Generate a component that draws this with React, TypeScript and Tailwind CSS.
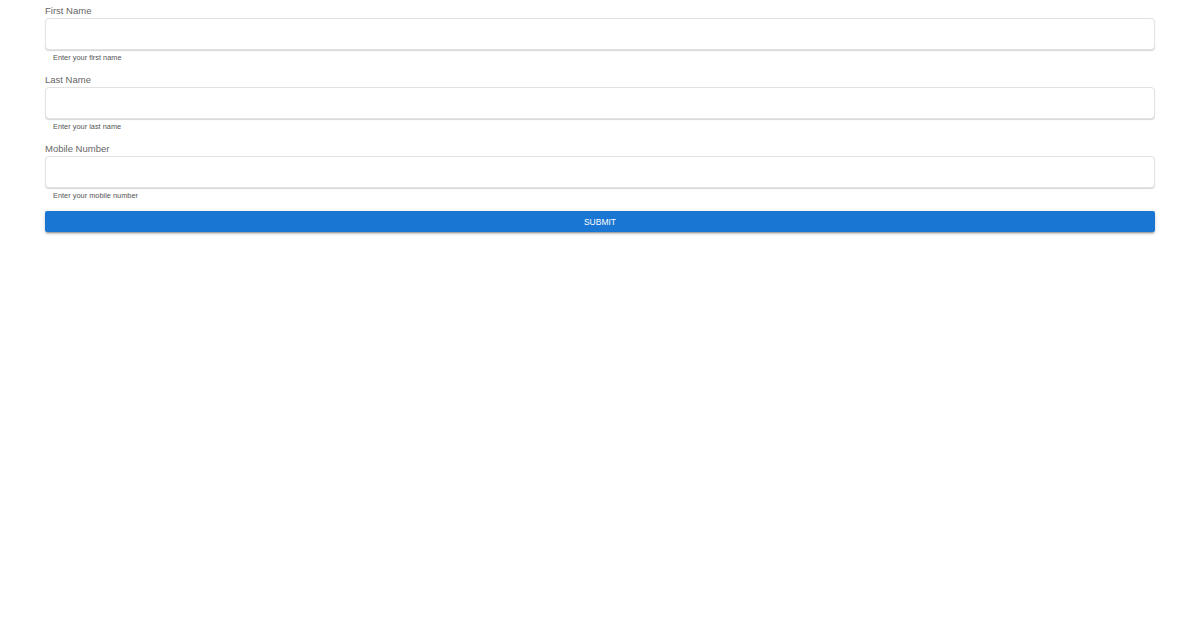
const fields = [
  { label: 'First Name', helper: 'Enter your first name' },
  { label: 'Last Name', helper: 'Enter your last name' },
  { label: 'Mobile Number', helper: 'Enter your mobile number' },
];

export default function App() {
  return (
    <div
      className="min-h-screen bg-white px-[45px] pt-[5px]"
      style={{ fontFamily: '"Liberation Sans", Arial, sans-serif' }}
    >
      <form className="flex flex-col" onSubmit={(e) => e.preventDefault()}>
        {fields.map((field) => (
          <div key={field.label} className="mb-[12px] flex flex-col">
            <label className="mb-px text-[9.5px] leading-[12px] text-[#666]">{field.label}</label>
            <input
              type="text"
              className="h-[32px] w-full rounded-[4px] border border-[#e2e2e2] bg-white px-2 text-sm outline-none shadow-[0_1px_1px_0_rgba(0,0,0,0.16)]"
            />
            <span className="mt-[3px] pl-2 text-[7.4px] leading-[9px] text-[#555]">{field.helper}</span>
          </div>
        ))}
        <button
          type="submit"
          className="-mt-px h-[21px] w-full rounded-[2px] bg-[#1976d2] pt-px text-[8.5px] uppercase text-white shadow-[0_3px_1px_-2px_rgba(0,0,0,0.2),0_2px_2px_0_rgba(0,0,0,0.14),0_1px_5px_0_rgba(0,0,0,0.12)]"
        >
          Submit
        </button>
      </form>
    </div>
  );
}
